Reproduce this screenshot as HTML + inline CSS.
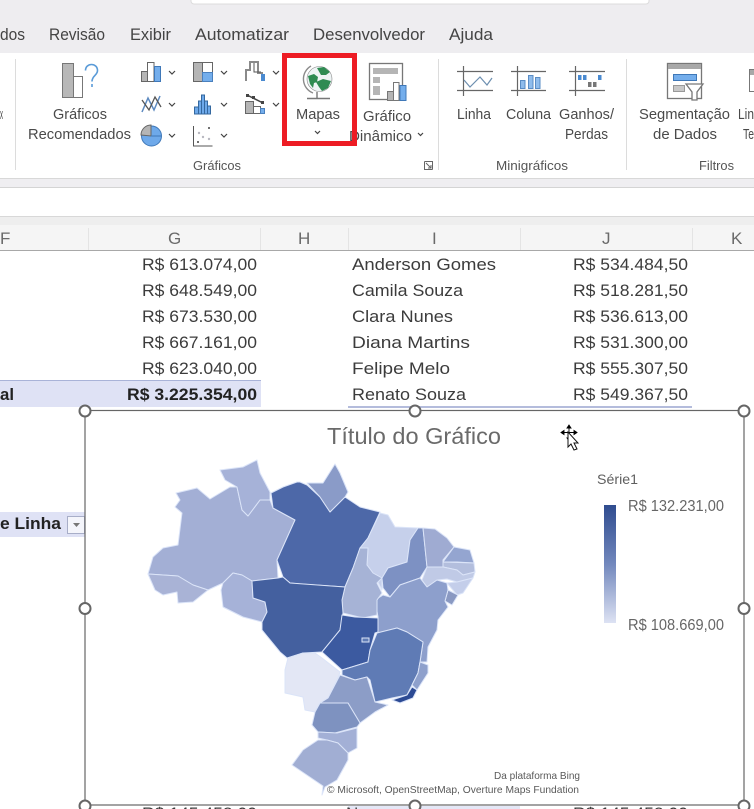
<!DOCTYPE html>
<html lang="pt-BR"><head><meta charset="utf-8"><title>Excel</title>
<style>
html,body{margin:0;padding:0;background:#fff;overflow:hidden}
svg{display:block}
text{font-family:"Liberation Sans",sans-serif}
.tab{font-size:16.5px;fill:#444}
.r{font-size:15px;fill:#4a4a4a}
.g{font-size:13px;fill:#555}
.h{font-size:17px;fill:#6a6a6a}
.c{font-size:17px;fill:#3c3c3c}
.b{font-size:17px;fill:#222;font-weight:bold}
.st path{stroke:#dbe4f8;stroke-width:1;stroke-linejoin:round}
.ch{fill:none;stroke:#444;stroke-width:1.2}
</style></head><body>
<svg xmlns="http://www.w3.org/2000/svg" width="754" height="809" viewBox="0 0 754 809">
<defs><linearGradient id="lg" x1="0" y1="0" x2="0" y2="1"><stop offset="0" stop-color="#2f4c8f"/><stop offset=".5" stop-color="#7288bd"/><stop offset="1" stop-color="#dde2f3"/></linearGradient></defs>
<rect width="754" height="809" fill="#fff"/>
<!-- title / tabs band -->
<rect width="754" height="53" fill="#eeedf0"/>
<rect x="191" y="-6" width="458" height="10" rx="3" fill="#fff" stroke="#dcdcdc"/>
<text class="tab" x="0" y="40" textLength="25" lengthAdjust="spacingAndGlyphs">dos</text>
<text class="tab" x="49" y="40" textLength="56" lengthAdjust="spacingAndGlyphs">Revisão</text>
<text class="tab" x="130" y="40" textLength="41" lengthAdjust="spacingAndGlyphs">Exibir</text>
<text class="tab" x="195" y="40" textLength="94" lengthAdjust="spacingAndGlyphs">Automatizar</text>
<text class="tab" x="313" y="40" textLength="112" lengthAdjust="spacingAndGlyphs">Desenvolvedor</text>
<text class="tab" x="449" y="40" textLength="44" lengthAdjust="spacingAndGlyphs">Ajuda</text>
<!-- ribbon -->
<rect y="53" width="754" height="125" fill="#fff"/>
<rect y="178" width="754" height="9" fill="#efeef1"/>
<rect y="178" width="754" height="1" fill="#d8d8d8"/>
<rect y="187" width="754" height="1" fill="#d4d4d4"/>
<g fill="#dcdcdc"><rect x="15" y="59" width="1" height="111"/><rect x="438" y="59" width="1" height="111"/><rect x="626" y="59" width="1" height="111"/></g>
<text class="r" x="0" y="119" textLength="3" lengthAdjust="spacingAndGlyphs">x</text>
<text class="r" x="53" y="119" textLength="54" lengthAdjust="spacingAndGlyphs">Gráficos</text>
<text class="r" x="28" y="139" textLength="103" lengthAdjust="spacingAndGlyphs">Recomendados</text>
<text class="r" x="296" y="119" textLength="44" lengthAdjust="spacingAndGlyphs">Mapas</text>
<text class="r" x="363" y="121" textLength="48" lengthAdjust="spacingAndGlyphs">Gráfico</text>
<text class="r" x="349" y="141" textLength="63" lengthAdjust="spacingAndGlyphs">Dinâmico</text>
<text class="r" x="457" y="119" textLength="34" lengthAdjust="spacingAndGlyphs">Linha</text>
<text class="r" x="506" y="119" textLength="45" lengthAdjust="spacingAndGlyphs">Coluna</text>
<text class="r" x="559" y="119" textLength="55" lengthAdjust="spacingAndGlyphs">Ganhos/</text>
<text class="r" x="565" y="139" textLength="43" lengthAdjust="spacingAndGlyphs">Perdas</text>
<text class="r" x="639" y="119" textLength="91" lengthAdjust="spacingAndGlyphs">Segmentação</text>
<text class="r" x="653" y="139" textLength="64" lengthAdjust="spacingAndGlyphs">de Dados</text>
<text class="r" x="738" y="119" textLength="16" lengthAdjust="spacingAndGlyphs">Lin</text>
<text class="r" x="743" y="139" textLength="11" lengthAdjust="spacingAndGlyphs">Te</text>
<text class="g" x="193" y="170" textLength="48" lengthAdjust="spacingAndGlyphs">Gráficos</text>
<text class="g" x="496" y="170" textLength="72" lengthAdjust="spacingAndGlyphs">Minigráficos</text>
<text class="g" x="699" y="170" textLength="35" lengthAdjust="spacingAndGlyphs">Filtros</text>
<!-- chevrons -->
<g class="ch">
<path d="M169,71l3,3l3,-3M221,71l3,3l3,-3M273,71l3,3l3,-3M169,103l3,3l3,-3M221,103l3,3l3,-3M273,103l3,3l3,-3M169,134l3,3l3,-3M221,134l3,3l3,-3M315,131l2.500,2.500l2.500,-2.500M418,133l2.500,2.500l2.500,-2.500"/>
</g>
<!-- recommended charts icon -->
<rect x="62.500" y="63.500" width="11" height="34" fill="#b8b8b8" stroke="#777"/>
<rect x="73.500" y="76.500" width="9" height="21" fill="#fff" stroke="#777"/>
<path d="M85.500,70.500c0,-8 12,-8 12,0c0,5 -5.500,5 -5.500,11M92,84v3" fill="none" stroke="#5a9bd8" stroke-width="1.600"/>
<!-- col 1 icons -->
<rect x="141.500" y="71.500" width="6" height="10" fill="#b5b5b5" stroke="#666"/><rect x="147.500" y="62.500" width="6.500" height="19" fill="#fff" stroke="#666"/><rect x="154.500" y="66.500" width="6" height="15" fill="#74aeec" stroke="#3f78b8"/>
<path d="M142,112L148,98L154,110L160,96" fill="none" stroke="#5d8ac0" stroke-width="1.500"/><path d="M142,100L149,110L155,97L161,107" fill="none" stroke="#555" stroke-width="1.300"/>
<circle cx="151.500" cy="136" r="10" fill="#6ea9ea" stroke="#3f78b8"/><path d="M151,136v-11a10,10 0 0,0 -10,10z" fill="#b5b5b5" stroke="#666"/><path d="M151,136h10" stroke="#3f78b8"/>
<!-- col 2 icons -->
<rect x="193.500" y="62.500" width="9" height="19" fill="#b5b5b5" stroke="#666"/><rect x="202.500" y="62.500" width="10" height="19" fill="#fff" stroke="#666"/><rect x="202.500" y="72.500" width="10" height="9" fill="#74aeec" stroke="#4a80bd"/>
<path d="M194.500,114v-7h4v-6h3v-6h3v6h3v5h3v8z" fill="#6ea9ea" stroke="#34689f"/><path d="M198.500,107v7M201.500,101v13M204.500,101v13M207.500,106v8" stroke="#34689f"/>
<path d="M193.500,126v20h19" fill="none" stroke="#555"/><g fill="#444"><circle cx="209" cy="128" r="1"/><circle cx="198" cy="142" r="1"/></g><g fill="#b8b8c0"><circle cx="199" cy="133" r="1.200"/><circle cx="203" cy="137" r="1.200"/><circle cx="209" cy="139" r="1.200"/></g>
<!-- col 3 icons -->
<path d="M246,81V70h4v-8h8v11h4v8" fill="none" stroke="#8a8a8a" stroke-width="2"/><path d="M254,63v9h7" fill="none" stroke="#555"/><rect x="261" y="74" width="4" height="7" fill="#4a8ad0"/>
<rect x="245.500" y="101.500" width="8" height="12" fill="#b5b5b5" stroke="#666"/><rect x="253.500" y="106.500" width="7" height="7" fill="#fff" stroke="#666"/><rect x="260.500" y="108.500" width="4" height="5" fill="#74aeec" stroke="#4a80bd"/>
<path d="M247,95l16,8" stroke="#444" stroke-width="1.500"/><rect x="246" y="94" width="3" height="3" fill="#444"/><rect x="252" y="96" width="3" height="3" fill="#444"/><rect x="261" y="101" width="3" height="3" fill="#444"/>
<!-- globe -->
<path d="M311,66a15,15 0 0,0 2,27" fill="none" stroke="#8a8a8a" stroke-width="1.400"/>
<circle cx="319.500" cy="79" r="12.500" fill="#eef4f5" stroke="#888" stroke-width=".6"/>
<path d="M317,68l7,-1l6,5l-4,3l-5,0zM308,76l6,-2l4,3l-1,5l-3,1l-1,5l-3,-4zM316,82l7,-3l8,2l-3,7l-6,3l-3,-4z" fill="#2f8b52"/>
<path d="M317,92v6M307,98.500h23" stroke="#777" stroke-width="1.400"/>
<!-- pivot chart icon -->
<rect x="369.500" y="63.500" width="33" height="36" fill="#fff" stroke="#777" stroke-width="1.300"/>
<rect x="373" y="68" width="25" height="6" fill="#b5b5b5"/><rect x="373" y="77" width="7" height="6" fill="#b5b5b5"/><rect x="373" y="86" width="7" height="9" fill="#b5b5b5"/>
<rect x="387.500" y="91.500" width="6" height="9" fill="#b5b5b5" stroke="#777"/><rect x="393.500" y="82.500" width="5.500" height="18" fill="#fff" stroke="#777"/><rect x="400" y="85.500" width="6" height="15" fill="#74aeec" stroke="#3f78b8"/>
<!-- sparklines -->
<g stroke="#666" stroke-width="1.200" fill="none">
<path d="M457,71.500h36M457,90.500h36M463.500,66v30"/>
<path d="M511,71.500h35M511,90.500h35M517.500,66v30"/>
<path d="M569,71.500h36M569,90.500h36M575.500,66v30"/>
</g>
<path d="M464,80l6,7l10,-10l7,8l5,-7" fill="none" stroke="#6d8fb0" stroke-width="1.200"/>
<g fill="#8fbcec" stroke="#5a8cc4"><rect x="520.500" y="80.500" width="4.500" height="8"/><rect x="528.500" y="75.500" width="4.500" height="13"/><rect x="535.500" y="77.500" width="4.500" height="11"/></g>
<g><rect x="578" y="75" width="3.500" height="5" fill="#4a8ad0"/><rect x="583" y="75" width="3.500" height="5" fill="#4a8ad0"/><rect x="588" y="82" width="3.500" height="5" fill="#777"/><rect x="593" y="82" width="3.500" height="5" fill="#777"/><rect x="598" y="75" width="3.500" height="5" fill="#4a8ad0"/></g>
<!-- slicer icon -->
<rect x="667.500" y="63.500" width="34" height="35" fill="#fff" stroke="#777" stroke-width="1.300"/><rect x="668" y="64" width="33" height="5" fill="#a8a8a8"/>
<rect x="673.500" y="74.500" width="23" height="6" fill="#74aeec" stroke="#3f78b8"/><rect x="673.500" y="85.500" width="11" height="6" fill="#c8c8c8" stroke="#999"/>
<path d="M686,84h17l-6,8v8h-5v-8z" fill="#fff" stroke="#777" stroke-width="1.300"/>
<rect x="749.500" y="69.500" width="12" height="22" fill="#fff" stroke="#777"/><rect x="750" y="70" width="6" height="5" fill="#a8a8a8"/>
<!-- dialog launcher -->
<path d="M424.500,161.500h8v8M424.500,161.500v8h8M426,163l5,5M431,165v3h-3" fill="none" stroke="#666"/>
<!-- red box -->
<rect x="284.500" y="55.500" width="70" height="88" fill="none" stroke="#ed1c24" stroke-width="5"/>
<!-- sheet headers -->
<rect y="216" width="754" height="1" fill="#d8d8d8"/>
<rect y="217" width="754" height="8" fill="#eeeeee"/>
<rect y="225" width="754" height="25" fill="#f5f5f5"/>
<rect y="250" width="754" height="1" fill="#a8a8a8"/>
<g fill="#e4e4e4"><rect x="88" y="228" width="1" height="22"/><rect x="260" y="228" width="1" height="22"/><rect x="348" y="228" width="1" height="22"/><rect x="520" y="228" width="1" height="22"/><rect x="692" y="228" width="1" height="22"/></g>
<text class="h" x="0" y="244">F</text><text class="h" x="168" y="244">G</text><text class="h" x="298" y="244">H</text><text class="h" x="432" y="244">I</text><text class="h" x="602" y="244">J</text><text class="h" x="731" y="244">K</text>
<!-- table 1 -->
<rect y="381" width="261" height="26" fill="#dfe2f5"/><rect y="380" width="261" height="1" fill="#a9b3d8"/>
<g text-anchor="end">
<text class="c" x="257" y="270" textLength="115" lengthAdjust="spacingAndGlyphs">R$ 613.074,00</text>
<text class="c" x="257" y="296" textLength="115" lengthAdjust="spacingAndGlyphs">R$ 648.549,00</text>
<text class="c" x="257" y="322" textLength="115" lengthAdjust="spacingAndGlyphs">R$ 673.530,00</text>
<text class="c" x="257" y="348" textLength="115" lengthAdjust="spacingAndGlyphs">R$ 667.161,00</text>
<text class="c" x="257" y="374" textLength="115" lengthAdjust="spacingAndGlyphs">R$ 623.040,00</text>
<text class="b" x="257" y="400" textLength="130" lengthAdjust="spacingAndGlyphs">R$ 3.225.354,00</text>
<text class="c" x="688" y="270" textLength="115" lengthAdjust="spacingAndGlyphs">R$ 534.484,50</text>
<text class="c" x="688" y="296" textLength="115" lengthAdjust="spacingAndGlyphs">R$ 518.281,50</text>
<text class="c" x="688" y="322" textLength="115" lengthAdjust="spacingAndGlyphs">R$ 536.613,00</text>
<text class="c" x="688" y="348" textLength="115" lengthAdjust="spacingAndGlyphs">R$ 531.300,00</text>
<text class="c" x="688" y="374" textLength="115" lengthAdjust="spacingAndGlyphs">R$ 555.307,50</text>
<text class="c" x="688" y="400" textLength="115" lengthAdjust="spacingAndGlyphs">R$ 549.367,50</text>
</g>
<text class="b" x="0" y="400" textLength="14" lengthAdjust="spacingAndGlyphs">al</text>
<text class="c" x="352" y="270" textLength="144" lengthAdjust="spacingAndGlyphs">Anderson Gomes</text>
<text class="c" x="352" y="296" textLength="111" lengthAdjust="spacingAndGlyphs">Camila Souza</text>
<text class="c" x="352" y="322" textLength="101" lengthAdjust="spacingAndGlyphs">Clara Nunes</text>
<text class="c" x="352" y="348" textLength="118" lengthAdjust="spacingAndGlyphs">Diana Martins</text>
<text class="c" x="352" y="374" textLength="98" lengthAdjust="spacingAndGlyphs">Felipe Melo</text>
<text class="c" x="352" y="400" textLength="114" lengthAdjust="spacingAndGlyphs">Renato Souza</text>
<rect x="348" y="406" width="344" height="2" fill="#b4bcdc"/>
<!-- left pivot header -->
<rect y="512" width="85" height="25" fill="#dfe2f5"/>
<text class="b" x="0" y="529" textLength="61" lengthAdjust="spacingAndGlyphs">e Linha</text>
<rect x="67.500" y="516.500" width="17" height="17" fill="#f4f5fb" stroke="#a8aec8"/><path d="M73,523h7l-3.500,4z" fill="#777"/>
<!-- below-chart row -->
<rect x="348" y="806" width="172" height="3" fill="#e4e7f6"/>
<text class="c" x="142" y="819" textLength="115" lengthAdjust="spacingAndGlyphs">R$ 145.458,00</text>
<text class="c" x="346" y="819">Nov</text>
<text class="c" x="573" y="819" textLength="115" lengthAdjust="spacingAndGlyphs">R$ 145.458,00</text>
<!-- chart -->
<rect x="85" y="410.500" width="659" height="394.500" fill="#fff" stroke="#666" stroke-width="1.200"/>
<text x="327" y="444" style="font-size:23px;fill:#6a6a6a" textLength="174" lengthAdjust="spacingAndGlyphs">Título do Gráfico</text>
<text x="597" y="484" style="font-size:14px;fill:#5f5f5f" textLength="41" lengthAdjust="spacingAndGlyphs">Série1</text>
<rect x="604" y="505" width="12" height="118" fill="url(#lg)"/>
<text x="628" y="511" style="font-size:15.500px;fill:#666" textLength="96" lengthAdjust="spacingAndGlyphs">R$ 132.231,00</text>
<text x="628" y="630" style="font-size:15.500px;fill:#666" textLength="96" lengthAdjust="spacingAndGlyphs">R$ 108.669,00</text>
<text x="494" y="779" style="font-size:10.500px;fill:#595959" textLength="86" lengthAdjust="spacingAndGlyphs">Da plataforma Bing</text>
<text x="327" y="793" style="font-size:10.500px;fill:#595959" textLength="252" lengthAdjust="spacingAndGlyphs">© Microsoft, OpenStreetMap, Overture Maps Fundation</text>
<!-- map -->
<g class="st">
<path fill="#a3afd5" d="M176,493L197,488L210,499L230,487L237,487L242,510L248,516L260,500L270,500L273,508L295,520L277,560L278,578L252,581L242,575L233,573L223,583L208,590L193,585L178,576L148,574L153,557L163,548L178,545L182,513L175,507L180,500Z"/>
<path fill="#a6b2d8" d="M220,470L243,467L257,460L260,473L270,492L270,500L260,500L248,516L242,510L237,487L225,480Z"/>
<path fill="#a9b3d6" d="M148,574L178,576L193,585L208,590L193,602L178,603L177,592L163,595L155,590Z"/>
<path fill="#a6b2d8" d="M233,573L242,575L252,581L253,598L265,602L267,612L262,622L243,617L223,607L221,590L223,583Z"/>
<path fill="#4d68a8" d="M271,493L283,487L297,482L300,482L307,485L320,497L330,512L345,497L360,507L380,512L368,538L360,548L353,568L345,587L300,584L290,583L283,577L278,563L277,560L295,520L273,508Z"/>
<path fill="#8a9bc8" d="M307,483L323,483L335,464L340,473L348,492L345,497L330,512L320,497Z"/>
<path fill="#c6d0eb" d="M380,513L388,515L395,527L418,528L410,540L407,562L388,568L382,578L382,590L373,573L367,565L368,548L360,548L368,538Z"/>
<path fill="#7d91c3" d="M418,528L423,528L427,567L420,578L400,585L390,597L383,588L382,578L388,568L407,562L410,540Z"/>
<path fill="#9fabd2" d="M423,528L435,529L447,538L454,547L443,560L443,567L427,567Z"/>
<path fill="#94a5d0" d="M454,547L470,550L474,563L457,562L443,562Z"/>
<path fill="#b3bedd" d="M443,562L474,563L475,572L463,575L457,570L443,567Z"/>
<path fill="#c0cae6" d="M427,567L443,567L457,570L463,575L475,572L473,578L457,582L447,579L437,580L427,587L422,580Z"/>
<path fill="#c4ceea" d="M473,578L463,593L457,595L447,583L457,582Z"/>
<path fill="#8a99c2" d="M448,590L458,595L452,605L445,601Z"/>
<path fill="#8d9fcc" d="M427,587L437,580L447,583L448,590L445,601L448,607L438,620L437,630L428,647L427,662L420,662L423,642L407,632L397,628L377,633L378,617L375,600L383,595L390,597L400,585L420,578Z"/>
<path fill="#a6b3d6" d="M368,548L367,565L373,573L382,578L377,583L382,593L377,600L377,615L363,618L343,613L342,600L345,587L353,568L360,548Z"/>
<path fill="#44609f" d="M252,581L278,578L283,577L290,583L345,587L342,600L343,613L340,630L322,652L303,653L287,658L280,652L262,630L262,622L267,612L265,602L253,598Z"/>
<path fill="#3c5aa0" d="M342,615L355,617L378,618L378,632L375,633L370,650L368,662L342,670L322,652L340,630Z"/>
<path fill="#5f7bb5" d="M377,633L397,628L407,632L423,642L420,662L418,673L412,685L407,695L392,698L375,702L370,680L367,677L355,680L342,675L342,670L368,662L370,650Z"/>
<path fill="#8ea0cc" d="M420,662L428,665L428,673L417,690L412,685L418,673Z"/>
<path fill="#2c4a94" d="M412,687L417,690L413,698L400,703L392,700L407,695Z"/>
<path fill="#e3e7f5" d="M288,658L303,653L315,653L322,658L340,672L338,678L328,698L320,703L315,712L305,710L303,697L285,693L285,670Z"/>
<path fill="#8c9dc7" d="M340,675L355,680L367,677L375,702L388,705L375,712L360,723L348,703L320,703L328,698Z"/>
<path fill="#7e92c0" d="M320,703L348,703L360,723L357,727L335,733L318,732L312,725L315,712Z"/>
<path fill="#a3b0d6" d="M318,732L337,733L357,728L357,748L348,753L338,743L327,740L318,738Z"/>
<path fill="#a1aed3" d="M318,740L327,740L338,743L348,753L348,760L337,780L325,787L322,795L323,786L292,765L303,750Z"/>
<rect x="362" y="638" width="7" height="4" fill="#5f7bb5" stroke="#dbe4f8"/>
</g>
<!-- handles -->
<g fill="#fff" stroke="#666" stroke-width="2">
<circle cx="85" cy="411" r="5.500"/><circle cx="415" cy="411" r="5.500"/><circle cx="744" cy="411" r="5.500"/>
<circle cx="85" cy="608.500" r="5.500"/><circle cx="744" cy="608.500" r="5.500"/>
<circle cx="85" cy="806" r="5.500"/><circle cx="415" cy="806" r="5.500"/><circle cx="744" cy="806" r="5.500"/>
</g>
<!-- cursor -->
<path d="M569,425v16M561,432.500h16M569,425l-2,3h4zM561,432.500l3,-2v4zM577,432.500l-3,-2v4zM569,441l-2,-3h4z" fill="#000" stroke="#000" stroke-width=".9"/>
<path d="M568,432v15l3,-3l3,6l3,-1l-3,-6h4z" fill="#fff" stroke="#111"/>
</svg>
</body></html>
